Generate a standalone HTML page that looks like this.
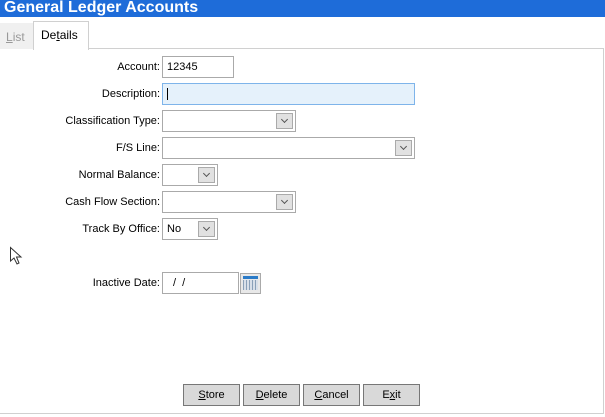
<!DOCTYPE html><html><head><style>
body{margin:0;width:605px;height:417px;background:#fff;position:relative;overflow:hidden;font-family:"Liberation Sans",Arial,sans-serif;font-size:11px;color:#000}
.a{position:absolute}
.title{left:0;top:0;width:605px;height:17px;background:#1e6cd9;color:#fff;font-weight:bold;font-size:16px;line-height:15px;padding-left:4px;box-sizing:border-box}
.lbl{text-align:right;width:160px;left:0}
.in{border:1px solid #aaa;background:#fff;box-sizing:border-box;height:22px;line-height:21px;padding-left:4px}
.dd{position:absolute;right:2px;top:2px;width:17px;height:16px;background:#e1e1e1;border:1px solid #aaa;box-sizing:border-box}
.dd:after{content:"";position:absolute;left:5px;top:3px;width:4px;height:4px;border-right:1px solid #555;border-bottom:1px solid #555;transform:rotate(45deg)}
.btn{top:384px;width:57px;height:22px;background:#d9d9d9;border:1px solid #777;box-sizing:border-box;text-align:center;line-height:21px;font-size:11px}
</style></head><body>
<div class="a title">General Ledger Accounts</div>
<div class="a" style="left:0;top:48px;width:604px;height:366px;border-top:1px solid #d0d0d0;border-right:1px solid #d0d0d0;border-bottom:1px solid #d0d0d0;box-sizing:border-box"></div>
<div class="a" style="left:0;top:23px;width:33px;height:26px;background:#f0f0f0;color:#999;font-size:12px;line-height:28px;padding-left:6px;box-sizing:border-box"><u>L</u>ist</div>
<div class="a" style="left:33px;top:21px;width:56px;height:29px;background:#fff;border:1px solid #d0d0d0;border-bottom:none;box-sizing:border-box;font-size:12px;line-height:26px;padding-left:7px">De<u>t</u>ails</div>

<div class="a lbl" style="top:61px">Account:</div>
<div class="a in" style="left:162px;top:56px;width:72px">12345</div>
<div class="a lbl" style="top:88px">Description:</div>
<div class="a in" style="left:162px;top:83px;width:253px;background:#e5f1fb;border-color:#7eb4ea"><span style="display:inline-block;width:1px;height:12px;background:#000;vertical-align:middle"></span></div>
<div class="a lbl" style="top:115px">Classification Type:</div>
<div class="a in" style="left:162px;top:110px;width:134px"><div class="dd"></div></div>
<div class="a lbl" style="top:142px">F/S Line:</div>
<div class="a in" style="left:162px;top:137px;width:253px"><div class="dd"></div></div>
<div class="a lbl" style="top:169px">Normal Balance:</div>
<div class="a in" style="left:162px;top:164px;width:56px"><div class="dd"></div></div>
<div class="a lbl" style="top:196px">Cash Flow Section:</div>
<div class="a in" style="left:162px;top:191px;width:134px"><div class="dd"></div></div>
<div class="a lbl" style="top:223px">Track By Office:</div>
<div class="a in" style="left:162px;top:218px;width:56px">No<div class="dd"></div></div>
<div class="a lbl" style="top:277px">Inactive Date:</div>
<div class="a in" style="left:162px;top:272px;width:77px;padding-left:10px">/&nbsp;&nbsp;/</div>
<div class="a" style="left:240px;top:273px;width:21px;height:21px;border:1px solid #aaa;box-sizing:border-box;background:#e8e8e8">
<div class="a" style="left:2px;top:2px;width:15px;height:3px;background:#2a7bc8"></div>
<div class="a" style="left:2px;top:6px;width:15px;height:10px;background:repeating-linear-gradient(90deg,#8aa0b8 0 1px,#d8dfe8 1px 3px)"></div></div>
<svg class="a" style="left:9px;top:246px" width="14" height="20"><path d="M1.5 1.5 L1.5 15 L5 12 L8 18 L10 17 L7.5 11 L12 11 Z" fill="#fff" stroke="#333" stroke-width="1"/></svg>

<div class="a btn" style="left:183px"><u>S</u>tore</div>
<div class="a btn" style="left:243px"><u>D</u>elete</div>
<div class="a btn" style="left:303px"><u>C</u>ancel</div>
<div class="a btn" style="left:363px">E<u>x</u>it</div>
</body></html>
